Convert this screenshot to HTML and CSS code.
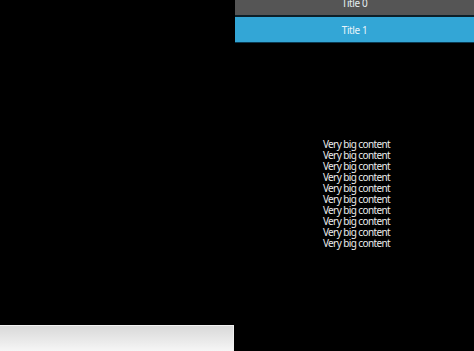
FILE: index.html
```html
<!DOCTYPE html>
<html>
<head>
<meta charset="utf-8">
<link rel="stylesheet" href="styles.css">
</head>
<body>
<div class="screen">
  <div class="left">
    <div class="left-space"></div>
    <div class="bottom-panel"></div>
  </div>
  <div class="right">
    <div class="tabs">
      <div class="tab tab-off">Title 0</div>
      <div class="tab tab-on">Title 1</div>
    </div>
    <div class="content">
      <div class="lines">
        <div>Very big content</div>
        <div>Very big content</div>
        <div>Very big content</div>
        <div>Very big content</div>
        <div>Very big content</div>
        <div>Very big content</div>
        <div>Very big content</div>
        <div>Very big content</div>
        <div>Very big content</div>
        <div>Very big content</div>
      </div>
    </div>
  </div>
</div>
</body>
</html>
```

FILE: styles.css
```css
html, body {
  margin: 0;
  padding: 0;
  background: #000;
}
.screen {
  width: 474px;
  height: 351px;
  display: flex;
  overflow: hidden;
  background: #000;
  font-family: "Noto Sans", "Open Sans", sans-serif;
}
.left {
  width: 234px;
  display: flex;
  flex-direction: column;
}
.left-space {
  flex: 1;
}
.bottom-panel {
  height: 26px;
  box-sizing: border-box;
  border-top: 1px solid #f2f2f2;
  border-right: 1px solid #f0f0f0;
  background: linear-gradient(#d9d9d9, #e4e4e4 40%, #f6f6f6);
}
.right {
  margin-left: 1px;
  flex: 1;
  display: flex;
  flex-direction: column;
  overflow: hidden;
}
.tabs {
  margin-top: -10px;
  display: flex;
  flex-direction: column;
}
.tab {
  height: 25px;
  display: flex;
  align-items: center;
  justify-content: center;
  font-size: 10px;
  letter-spacing: -0.4px;
  color: #e4eef2;
}
.tab-off {
  background: #555555;
  border-bottom: 2px solid #0d1f28;
}
.tab-on {
  background: #33a6d6;
  border-bottom: 1px solid #0b3a52;
  color: #e8f4fa;
}
.content {
  flex: 1;
  display: flex;
  align-items: center;
  justify-content: center;
  padding-left: 4px;
}
.lines {
  font-size: 10px;
  line-height: 11px;
  letter-spacing: -0.6px;
  color: #ececec;
  text-align: center;
  margin-top: -6px;
}
```
